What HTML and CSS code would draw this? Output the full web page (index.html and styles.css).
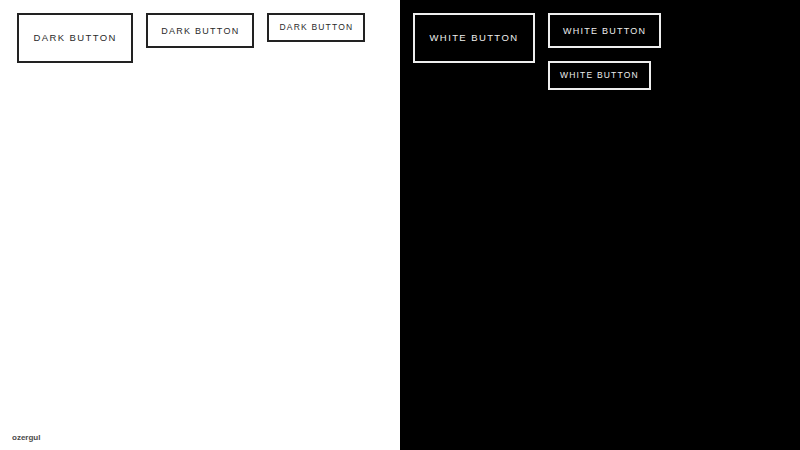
FILE: index.html
```html
<!DOCTYPE html>
<html lang="en">
  <head>
    <meta charset="UTF-8" />
    <meta name="viewport" content="width=device-width, initial-scale=1.0" />
    <title>Outline Buttons</title>
    <link rel="stylesheet" href="styles.css">
  </head>
  <body>
    <section class="side side-light">
      <div class="buttons">
        <button class="btn btn-dark btn-lg">Dark Button</button>
        <button class="btn btn-dark btn-md">Dark Button</button>
        <button class="btn btn-dark btn-sm">Dark Button</button>
      </div>
      <p class="credit">ozergul</p>
    </section>

    <section class="side side-dark">
      <div class="buttons">
        <button class="btn btn-white btn-lg">White Button</button>
        <button class="btn btn-white btn-md">White Button</button>
        <button class="btn btn-white btn-sm">White Button</button>
      </div>
    </section>
  </body>
</html>
```

FILE: styles.css
```css
html,
body {
  height: 100%;
}
body {
  margin: 0;
  display: grid;
  grid-template-columns: 1fr 1fr;
  font-family: "Liberation Sans", Arial, sans-serif;
}
.side {
  display: flex;
  flex-direction: column;
  padding: 13px;
  box-sizing: border-box;
}
.side-light {
  background-color: #fff;
  padding-left: 17px;
  padding-bottom: 7px;
}
.side-dark {
  background-color: #000;
}
.buttons {
  display: flow-root;
}
.btn {
  float: left;
  margin: 0 13px 13px 0;
  background: transparent;
  border: 2px solid;
  border-radius: 0;
  font-family: inherit;
  text-transform: uppercase;
  cursor: pointer;
}
.btn-dark {
  border-color: #222;
  color: #2a2a2a;
}
.btn-white {
  border-color: #eee;
  color: #eee;
}
.btn-lg {
  padding: 15px 14.5px;
  font-size: 9.5px;
  line-height: 16px;
  letter-spacing: 1.4px;
}
.btn-md {
  padding: 7.5px 13px;
  font-size: 9px;
  line-height: 16px;
  letter-spacing: 1.25px;
}
.btn-sm {
  padding: 5px 10px;
  font-size: 8.5px;
  line-height: 15px;
  letter-spacing: 1.2px;
}
.btn:hover {
  opacity: 0.8;
}
.credit {
  margin: auto 0 0 -5px;
  font-size: 8px;
  font-weight: bold;
  line-height: 10px;
  color: #4a4a4a;
}
```
